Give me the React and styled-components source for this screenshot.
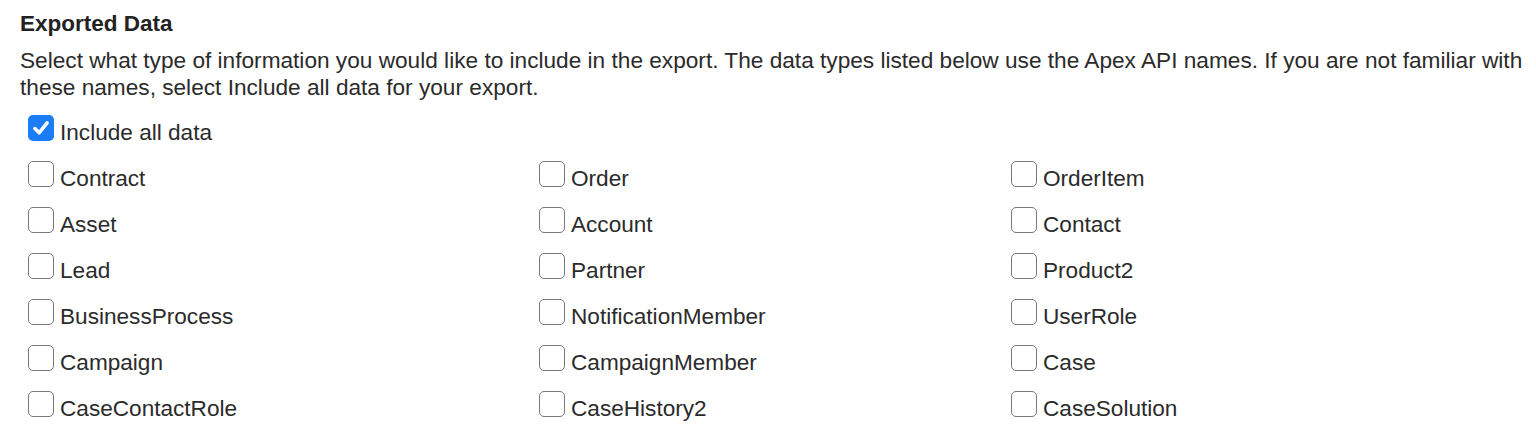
import React from 'react';
import styled, { createGlobalStyle } from 'styled-components';

const GlobalStyle = createGlobalStyle`
    body {
        margin: 0;
        background: #ffffff;
        font-family: "Liberation Sans", Arial, sans-serif;
        color: #2b2b2b;
    }
`;

const Section = styled.div`
    padding: 11px 10px 0 20px;
`;

const Title = styled.h3`
    margin: 0;
    font-size: 22.5px;
    line-height: 26px;
    font-weight: bold;
    color: #222;
`;

const Description = styled.p`
    margin: 9.5px 0 0 0;
    font-size: 22.65px;
    line-height: 27px;
    color: #2b2b2b;
`;

const AllRow = styled.div`
    display: flex;
    align-items: center;
    height: 46px;
    margin-top: 9.5px;
    padding-left: 8px;
`;

const Grid = styled.div`
    display: grid;
    grid-template-columns: 511px 472px 1fr;
    grid-auto-rows: 46px;
    align-items: center;
    padding-left: 8px;
`;

const Option = styled.label`
    display: flex;
    align-items: center;
    gap: 6px;
    font-size: 22.6px;
    color: #2b2b2b;
`;

const Box = styled.span`
    box-sizing: border-box;
    width: 26px;
    height: 26px;
    border-radius: 5px;
    flex-shrink: 0;
    display: flex;
    align-items: center;
    justify-content: center;
    position: relative;
    top: -5px;
    border: ${(p) => (p.checked ? 'none' : '1.5px solid #7a7a7a')};
    background: ${(p) => (p.checked ? '#1a7cf7' : '#fff')};
`;

const Label = styled.span`
    line-height: 26px;
`;

const Checkbox = ({ checked, label }) => (
    <Option>
        <Box checked={checked}>
            {checked && (
                <svg width="20" height="20" viewBox="0 0 18 18">
                    <path d="M3.5 9.5 L7.3 13.3 L14.5 4.3" fill="none" stroke="#fff" strokeWidth="3.2" strokeLinecap="round" strokeLinejoin="round" />
                </svg>
            )}
        </Box>
        <Label>{label}</Label>
    </Option>
);

const types = [
    'Contract', 'Order', 'OrderItem',
    'Asset', 'Account', 'Contact',
    'Lead', 'Partner', 'Product2',
    'BusinessProcess', 'NotificationMember', 'UserRole',
    'Campaign', 'CampaignMember', 'Case',
    'CaseContactRole', 'CaseHistory2', 'CaseSolution',
];

const App = () => {
    return (
        <>
            <GlobalStyle />
            <Section>
                <Title>Exported Data</Title>
                <Description>
                    Select what type of information you would like to include in the export. The data types listed below use the Apex API names. If you are not familiar with these names, select Include all data for your export.
                </Description>
                <AllRow>
                    <Checkbox checked label="Include all data" />
                </AllRow>
                <Grid>
                    {types.map((t) => (
                        <Checkbox key={t} label={t} />
                    ))}
                </Grid>
            </Section>
        </>
    );
};

export default App;
